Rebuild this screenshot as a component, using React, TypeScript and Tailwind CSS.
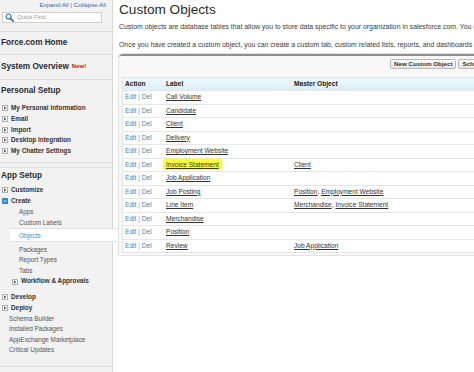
import React from "react";

const font = "font-['Liberation_Sans',Arial,sans-serif]";

function Collapsed() {
  return (
    <svg width="6" height="6" viewBox="0 0 6 6" className="shrink-0">
      <rect x="0.5" y="0.5" width="5" height="5" fill="#f7f7f7" stroke="#b0b0b0" />
      <path d="M2.2 1.6 L4.2 3 L2.2 4.4 Z" fill="#333" />
    </svg>
  );
}

function Expanded() {
  return (
    <svg width="6" height="6" viewBox="0 0 6 6" className="shrink-0">
      <rect x="0" y="0" width="6" height="6" rx="0.5" fill="#2b8bd6" />
      <rect x="1.6" y="2.6" width="2.8" height="0.9" fill="#dff0ff" />
    </svg>
  );
}

function SearchIcon() {
  return (
    <svg width="9" height="9" viewBox="0 0 10 10" className="shrink-0">
      <circle cx="4" cy="4" r="2.8" fill="#e8f1fa" stroke="#3d6f9e" strokeWidth="1.2" />
      <path d="M6 6 L9 9" stroke="#3d6f9e" strokeWidth="1.8" strokeLinecap="round" />
    </svg>
  );
}

type NavItem = { label: string; kind: "node" | "open"; indent?: boolean };

function NavRow({ label, kind, indent }: NavItem) {
  return (
    <div className={`flex h-[10.7px] items-center gap-[3px] ${indent ? "pl-[12px]" : "pl-[2px]"}`}>
      {kind === "node" ? <Collapsed /> : <Expanded />}
      <span className="text-[6.4px] leading-none font-bold whitespace-nowrap text-[#333]">{label}</span>
    </div>
  );
}

function Leaf({ children }: { children: React.ReactNode }) {
  return <div className="flex h-[10.6px] items-center text-[6.4px] text-[#555]">{children}</div>;
}

function Sidebar() {
  return (
    <div className="flex w-[113px] shrink-0 flex-col border-r border-[#d6d6d6] bg-[#f2f2f2]">
      <div className="h-[31px]">
        <div className="pr-[6px] pt-[1px] text-right text-[6.2px] leading-[7px] text-[#2f6ea8]">
          Expand All | Collapse All
        </div>
        <div className="mx-[2px] mt-[4px] flex h-[11px] w-[100px] items-center gap-[3px] border border-[#cfcfcf] bg-white pl-[2px]">
          <SearchIcon />
          <span className="text-[6px] text-[#9a9a9a]">Quick Find</span>
        </div>
      </div>
      <div className="flex h-[24px] items-center border-y border-[#dedede] pl-[1px] text-[8.2px] font-bold text-[#2a2a2a]">
        Force.com Home
      </div>
      <div className="flex h-[25px] items-center border-b border-[#dedede] pl-[1px] text-[8.2px] font-bold text-[#2a2a2a]">
        System Overview
        <span className="ml-[3px] -mt-[2px] text-[6px] font-bold text-[#e01010]">New!</span>
      </div>
      <div className="h-[83px] border-b border-[#dedede]">
        <div className="flex h-[23px] items-center pl-[1px] text-[8.2px] font-bold text-[#2a2a2a]">
          Personal Setup
        </div>
        <NavRow label="My Personal Information" kind="node" />
        <NavRow label="Email" kind="node" />
        <NavRow label="Import" kind="node" />
        <NavRow label="Desktop Integration" kind="node" />
        <NavRow label="My Chatter Settings" kind="node" />
      </div>
      <div className="mt-[4px] h-[200px] border-y border-[#dedede]">
        <div className="flex h-[17px] items-center pl-[1px] text-[8.2px] font-bold text-[#2a2a2a]">
          App Setup
        </div>
        <NavRow label="Customize" kind="node" />
        <NavRow label="Create" kind="open" />
        <div className="pl-[19px]">
          <div className="flex h-[11px] items-center text-[6.4px] text-[#555]">Apps</div>
          <div className="flex h-[11px] items-center text-[6.4px] text-[#555]">Custom Labels</div>
        </div>
        <div className="relative z-10 -mr-[5px] ml-[10px] flex h-[14px] items-center border-y border-[#e2e2e2] bg-white pl-[9px] text-[6.4px] text-[#3d8fd1]">
          Objects
        </div>
        <div className="mt-[2px] pl-[19px]">
          <Leaf>Packages</Leaf>
          <Leaf>Report Types</Leaf>
          <Leaf>Tabs</Leaf>
        </div>
        <NavRow label="Workflow & Approvals" kind="node" indent />
        <div className="h-[5px]" />
        <NavRow label="Develop" kind="node" />
        <NavRow label="Deploy" kind="node" />
        <div className="pl-[9px]">
          <Leaf>Schema Builder</Leaf>
          <Leaf>Installed Packages</Leaf>
          <Leaf>AppExchange Marketplace</Leaf>
          <Leaf>Critical Updates</Leaf>
        </div>
      </div>
    </div>
  );
}

const rows: { label: string; master: string[]; highlight?: boolean }[] = [
  { label: "Call Volume", master: [] },
  { label: "Candidate", master: [] },
  { label: "Client", master: [] },
  { label: "Delivery", master: [] },
  { label: "Employment Website", master: [] },
  { label: "Invoice Statement", master: ["Client"], highlight: true },
  { label: "Job Application", master: [] },
  { label: "Job Posting", master: ["Position", "Employment Website"] },
  { label: "Line Item", master: ["Merchandise", "Invoice Statement"] },
  { label: "Merchandise", master: [] },
  { label: "Position", master: [] },
  { label: "Review", master: ["Job Application"] },
];

function Button({ children }: { children: React.ReactNode }) {
  return (
    <div className="flex h-[10px] items-center rounded-[2px] border border-[#b8b8b8] bg-gradient-to-b from-white to-[#e6e6e6] px-[3px] text-[6.2px] font-bold whitespace-nowrap text-[#333]">
      {children}
    </div>
  );
}

function Main() {
  return (
    <div className="min-w-0 flex-1 pl-[6px]">
      <div className="pt-[2px] text-[13.6px] leading-[16px] text-[#2a2a2a]">Custom Objects</div>
      <div className="mt-[5px] text-[6.9px] leading-[8px] whitespace-nowrap text-[#3a3a3a]">
        Custom objects are database tables that allow you to store data specific to your organization in salesforce.com. You can use custom objects to extend
      </div>
      <div className="mt-[10px] text-[6.9px] leading-[8px] whitespace-nowrap text-[#3a3a3a]">
        Once you have created a custom object, you can create a custom tab, custom related lists, reports, and dashboards for users to interact with
      </div>
      <div className="mt-[5px] w-[392px] rounded-t-[3px] border-t-[2px] border-[#8e8e8e] bg-[#f8f8f8] pb-[2px] outline outline-[#e2e2e2]">
        <div className="flex gap-[2px] pt-[3px] pl-[271px]">
          <Button>New Custom Object</Button>
          <Button>Schema Builder</Button>
        </div>
        <div className="mx-[3px] mt-[8px] border border-[#e4e4e4] bg-white text-[6.6px]">
          <div className="flex h-[12px] items-center bg-gradient-to-b from-[#eef8fc] to-[#dbeff7] font-bold text-[#222]">
            <div className="w-[41px] pl-[2px]">Action</div>
            <div className="w-[128px] pl-[2px]">Label</div>
            <div className="pl-[2px]">Master Object</div>
          </div>
          {rows.map((r) => (
            <div key={r.label} className="flex h-[13.5px] items-center border-t border-[#e6e6e6]">
              <div className="w-[41px] pl-[2px] text-[#4b82b8]">
                Edit <span className="text-[#999]">|</span> Del
              </div>
              <div className="w-[128px] pl-[2px]">
                <span
                  className={`text-[#333] underline ${
                    r.highlight ? "-ml-[3px] rounded-[1px] bg-[#fbff3a] px-[3px] py-[2px]" : ""
                  }`}
                >
                  {r.label}
                </span>
              </div>
              <div className="pl-[2px] text-[#333]">
                {r.master.map((m, i) => (
                  <React.Fragment key={m}>
                    {i > 0 && ", "}
                    <span className="underline">{m}</span>
                  </React.Fragment>
                ))}
              </div>
            </div>
          ))}
        </div>
      </div>
    </div>
  );
}

export default function App() {
  return (
    <div className={`flex h-[372px] w-[474px] overflow-hidden bg-white ${font}`}>
      <Sidebar />
      <Main />
    </div>
  );
}
